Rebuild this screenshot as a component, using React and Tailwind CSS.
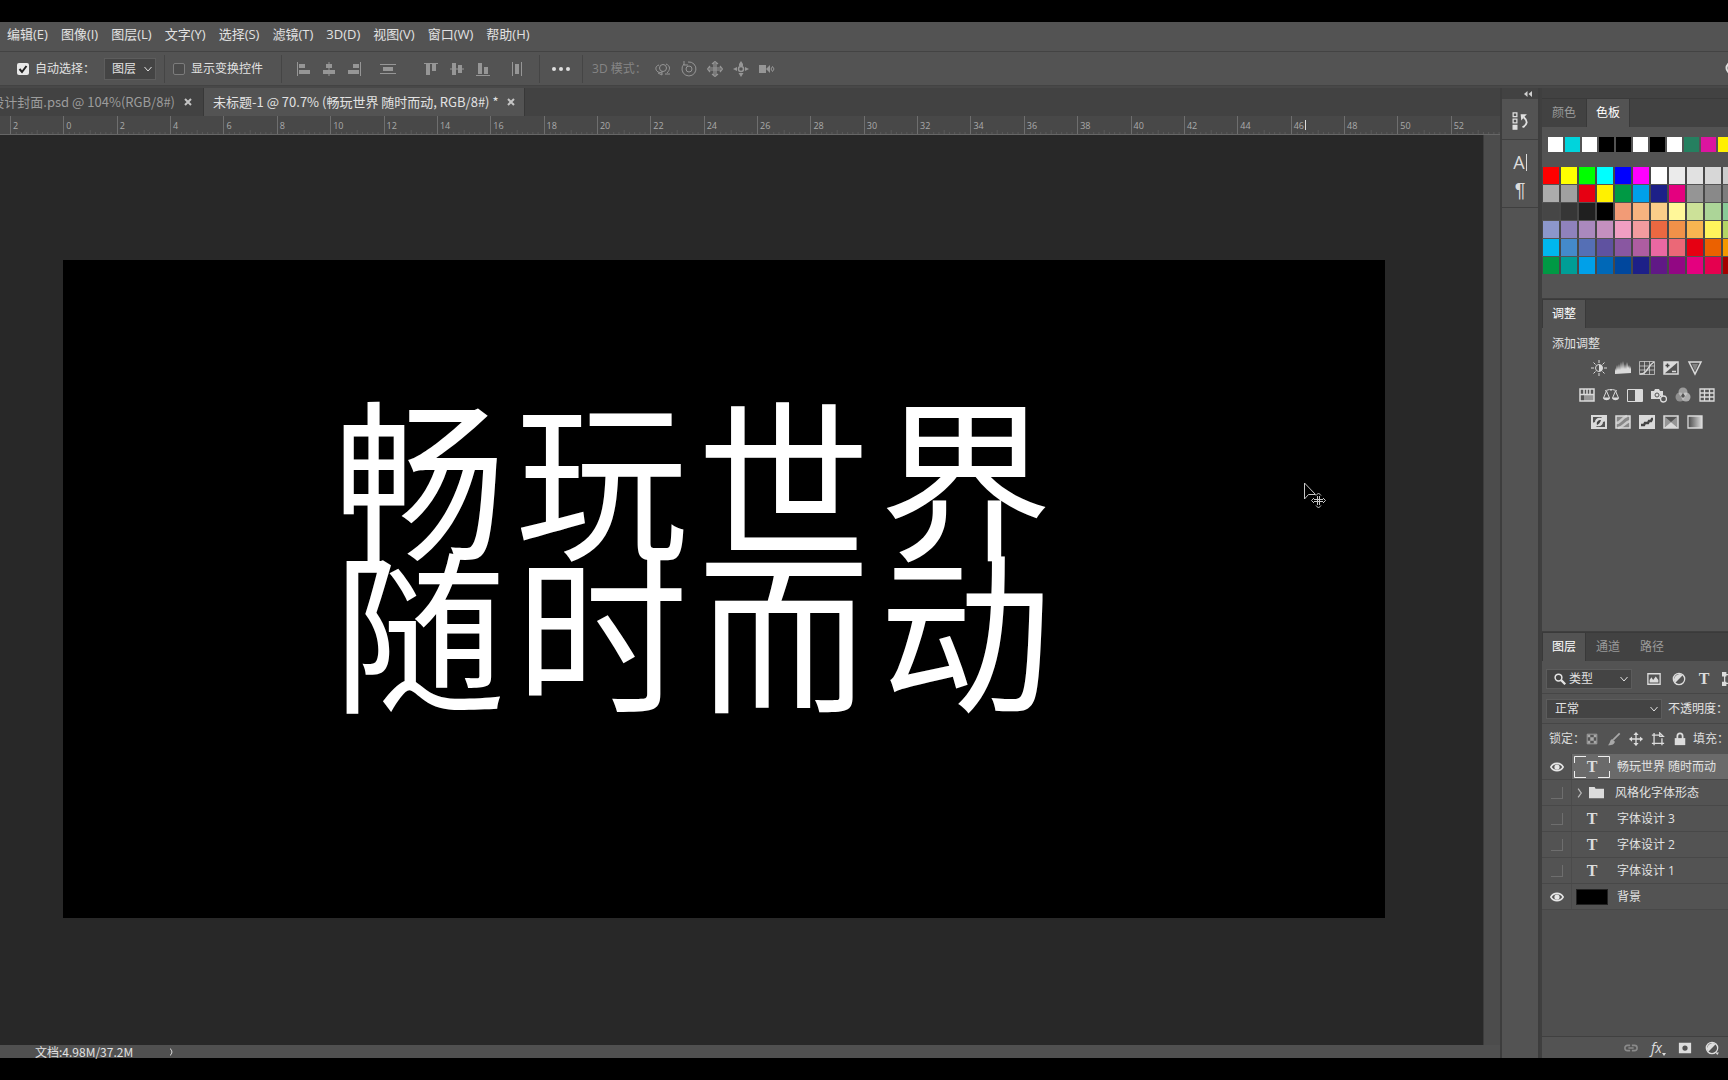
import { useState } from "react";

const menus = ["编辑(E)", "图像(I)", "图层(L)", "文字(Y)", "选择(S)", "滤镜(T)", "3D(D)", "视图(V)", "窗口(W)", "帮助(H)"];

const recentColors = ["#ffffff", "#00d4dc", "#ffffff", "#000000", "#000000", "#ffffff", "#000000", "#ffffff", "#258060", "#dc14a0", "#fff000"];

const swatches = [
    ["#ff0000", "#ffff00", "#00ff00", "#00ffff", "#0000ff", "#ff00ff", "#ffffff", "#ebebeb", "#e1e1e1", "#d7d7d7", "#cccccc"],
    ["#acacac", "#a0a0a0", "#e60012", "#fff100", "#009944", "#00a0e9", "#1d2088", "#e4007f", "#959595", "#898989", "#7d7d7d"],
    ["#464646", "#363636", "#202020", "#000000", "#f29b76", "#f6b37f", "#facd89", "#fff799", "#cce198", "#acd598", "#89c997"],
    ["#8c97cb", "#8f82bc", "#aa89bd", "#c490bf", "#f19ec2", "#f29c9f", "#eb6841", "#f19149", "#f8b551", "#fff45c", "#b3d465"],
    ["#00b7ee", "#448aca", "#556fb5", "#5f52a0", "#8957a1", "#ae5da1", "#ea68a2", "#eb6877", "#e60012", "#eb6100", "#f39800"],
    ["#009944", "#009e96", "#00a0e9", "#0068b7", "#00479d", "#1d2088", "#601986", "#920783", "#e4007f", "#e5004f", "#a40000"],
];

const initialLayers = [
    { id: 1, name: "畅玩世界 随时而动", kind: "text", visible: true, selected: true },
    { id: 2, name: "风格化字体形态", kind: "group", visible: false },
    { id: 3, name: "字体设计 3", kind: "text", visible: false },
    { id: 4, name: "字体设计 2", kind: "text", visible: false },
    { id: 5, name: "字体设计 1", kind: "text", visible: false },
    { id: 6, name: "背景", kind: "fill", visible: true },
];

const artLines = ["畅玩世界", "随时而动"];

const rulerMarks = Array.from({ length: 28 }, (_, i) => Math.abs(i * 2 - 2));

const Icon = ({ children, className = "size-4" }) => (
    <svg viewBox="0 0 16 16" fill="none" stroke="currentColor" className={`shrink-0 ${className}`} aria-hidden="true">
        {children}
    </svg>
);

const IconButton = ({ children, className = "size-4", label }) => (
    <button type="button" aria-label={label} className="flex shrink-0 items-center justify-center">
        <Icon className={className}>{children}</Icon>
    </button>
);

const Divider = () => <span className="h-7 w-px shrink-0 bg-[#454545]" />;

/* ---------- options bar ---------- */

const alignHorizontal = [
    { label: "左对齐", art: <><path d="M1.5 1v14" /><path fill="currentColor" stroke="none" d="M3 3h6v4H3zM3 9h11v4H3z" /></> },
    { label: "水平居中对齐", art: <><path d="M8 1v14" /><path fill="currentColor" stroke="none" d="M5 3h6v4H5zM2 9h12v4H2z" /></> },
    { label: "右对齐", art: <><path d="M14.5 1v14" /><path fill="currentColor" stroke="none" d="M7 3h6v4H7zM2 9h11v4H2z" /></> },
];

const alignVertical = [
    { label: "顶对齐", art: <><path d="M1 2.5h14" /><path fill="currentColor" stroke="none" d="M3 3h4v11H3zM9 3h4v7H9z" /></> },
    { label: "垂直居中对齐", art: <><path d="M1 8h14" /><path fill="currentColor" stroke="none" d="M3 2h4v12H3zM9 4h4v8H9z" /></> },
    { label: "底对齐", art: <><path d="M1 14.5h14" /><path fill="currentColor" stroke="none" d="M3 2h4v11H3zM9 6h4v7H9z" /></> },
];

const modes3d = [
    { label: "旋转", art: <><circle cx="8" cy="7" r="3.5" /><path d="M11 3c5 2 4 6 1 9M4 4C0 5 0 9 3 11l4 1M7 10v4l-4-2" /><path d="M10 13h5" /></> },
    { label: "滚动", art: <><circle cx="8" cy="8" r="3" /><path d="M3 3a7 7 0 1 0 4-2M3 0v4h4" /></> },
    { label: "拖动", art: <path strokeWidth="1.2" d="M7 2v12M9 2v12M2 7h12M2 9h12M5 3l3-2.500L11 3M5 13l3 2.500L11 13M3 5L.5 8 3 11M13 5l2.500 3L13 11" /> },
    { label: "滑动", art: <><circle cx="8" cy="8" r="2.500" strokeWidth="1.500" /><path fill="currentColor" stroke="none" d="M6 3l2-3 2 3v2H6zM5.500 12h5L8 16zM0 8l4-2v4zM16 8l-4-2v4z" /></> },
    { label: "缩放", art: <><path fill="currentColor" stroke="none" d="M0 4h7v8H0zM7 8l4-4v8z" /><path d="M13.500 5.500L12 8l1.500 2.500L15 8z" /></> },
];

const OptionsBar = () => (
    <div className="flex h-[35px] shrink-0 items-center border-y border-[#434343] bg-[#535353] pl-[17px] text-xs">
        <label className="flex w-[87px] shrink-0 items-center gap-1.5">
            <span className="relative flex size-3 items-center">
                <input type="checkbox" defaultChecked className="peer size-3 appearance-none rounded-xs bg-[#e8e8e8]" />
                <svg viewBox="0 0 12 12" className="pointer-events-none absolute inset-0 size-3" fill="none" stroke="#222" strokeWidth="2"><path d="M2.500 6l2.500 3 4.500-6" /></svg>
            </span>
            <span className="whitespace-nowrap">自动选择：</span>
        </label>
        <div className="relative w-[52px] shrink-0">
            <select aria-label="自动选择对象" className="block h-[22px] w-full appearance-none border border-[#5d5d5d] bg-[#444] pl-[7px] text-xs">
                <option>图层</option>
                <option>组</option>
            </select>
            <Icon className="pointer-events-none absolute top-[7px] right-1 size-2"><path strokeWidth="2" d="M1 4l7 8 7-8" /></Icon>
        </div>
        <div className="ml-2 flex shrink-0 items-center gap-2">
            <Divider />
            <label className="flex items-center gap-1.5">
                <input type="checkbox" className="size-3 appearance-none rounded-xs border border-[#7c7c7c] bg-[#4b4b4b]" />
                <span>显示变换控件</span>
            </label>
        </div>
        <div className="ml-[18px] flex shrink-0 items-center text-[#969696]">
            <Divider />
            <div className="ml-[14px] flex gap-[9px]">
                {alignHorizontal.map((a) => <IconButton key={a.label} label={a.label}>{a.art}</IconButton>)}
            </div>
            <div className="ml-[18px] flex">
                <IconButton label="垂直分布"><path d="M0 3.500h16M0 12.500h16" /><path fill="currentColor" stroke="none" d="M3 6h10v4H3z" /></IconButton>
            </div>
            <div className="ml-[14px]"><Divider /></div>
            <div className="ml-[13px] flex gap-[10px]">
                {alignVertical.map((a) => <IconButton key={a.label} label={a.label}>{a.art}</IconButton>)}
            </div>
            <div className="mr-[14px] ml-[18px] flex">
                <IconButton label="水平分布"><path d="M3.500 1v14M12.500 1v14" /><path fill="currentColor" stroke="none" d="M6 3h4v10H6z" /></IconButton>
            </div>
            <Divider />
            <button type="button" aria-label="更多" className="mx-3 flex gap-[3px] text-[#dedede]">
                <span className="size-[4px] rounded-full bg-current" />
                <span className="size-[4px] rounded-full bg-current" />
                <span className="size-[4px] rounded-full bg-current" />
            </button>
            <Divider />
            <span className="w-[72px] pl-[9px] whitespace-nowrap text-[#858585]">3D 模式：</span>
            <div className="flex gap-[10px]">
                {modes3d.map((m) => <IconButton key={m.label} label={m.label}>{m.art}</IconButton>)}
            </div>
        </div>
        <div className="-mr-[13px] ml-auto flex shrink-0 text-[#e0e0e0]">
            <IconButton label="搜索"><circle cx="7" cy="7" r="5.500" strokeWidth="2" /><path strokeWidth="2" d="M11 11l4 4" /></IconButton>
        </div>
    </div>
);

/* ---------- document area ---------- */

const CloseButton = () => (
    <button type="button" aria-label="关闭" className="text-[#c4c4c4]">
        <Icon className="size-2"><path strokeWidth="4" d="M2 2l12 12M14 2L2 14" /></Icon>
    </button>
);

const DocumentTabs = () => (
    <div className="flex h-[28px] shrink-0 overflow-hidden bg-[#424242] font-['Noto_Sans_CJK_SC',sans-serif] text-[13px] whitespace-nowrap">
        <div className="flex w-[203px] shrink-0 items-center justify-end gap-[9px] pr-[11px] text-[#9c9c9c]">
            <span>体设计封面.psd @ 104%(RGB/8#)</span>
            <CloseButton />
        </div>
        <div className="flex shrink-0 items-center gap-[9px] border-x border-[#383838] bg-[#535353] px-[9px]">
            <span>未标题-1 @ 70.7% (畅玩世界 随时而动, RGB/8#) *</span>
            <CloseButton />
        </div>
    </div>
);

const Ruler = () => (
    <div className="relative h-[19px] shrink-0 overflow-hidden border-b border-[#666] bg-[#484848] pl-2.5">
        <div className="flex h-full w-[1494px] text-[9px] leading-[19px] text-[#aaa]">
            {rulerMarks.map((mark, i) => (
                <div key={i} className="relative flex-1 border-l border-[#6e6e6e] pl-0.5">
                    {mark}
                    <svg viewBox="0 0 20 4" preserveAspectRatio="none" className="absolute bottom-0 left-0 h-1 w-full" stroke="#6a6a6a" strokeWidth="0.300">
                        <path d="M2 2v2M4 2v2M6 2v2M8 2v2M10 0v4M12 2v2M14 2v2M16 2v2M18 2v2" />
                    </svg>
                </div>
            ))}
        </div>
        {/* pointer position */}
        <span className="absolute top-1 left-[1305px] h-2.5 w-px bg-[#ddd]" />
    </div>
);

const MoveCursor = () => (
    <svg viewBox="0 0 24 28" className="absolute top-[222px] left-[1240px] h-7 w-6" fill="none" stroke="#c8c8c8" strokeWidth="1" aria-hidden="true">
        <path fill="#000" d="M1.500 1v16l4-4.500h7z" />
        <path d="M14.500 14v9M16.500 14v9M11 17.500h9M11 19.500h9M13 13.500l2.500-2.500 2.500 2.500M13 23.500l2.500 2.500 2.500-2.500M11 16l-2.500 2.500L11 21M20 16l2.500 2.500L20 21" />
    </svg>
);

const Workspace = () => (
    <main className="flex min-w-0 flex-1 flex-col">
        <DocumentTabs />
        <Ruler />
        <div className="flex min-h-0 flex-1">
            <div className="min-w-0 flex-1 overflow-hidden bg-[#282828] pt-[125px] pl-[63px]">
                <div className="relative h-[658px] w-[1322px] bg-black pt-[144px] pl-[270px]">
                    {artLines.map((line) => (
                        <p key={line} className="flex gap-[9px] text-[173px] leading-[152px] text-white">
                            {[...line].map((char) => <span key={char}>{char}</span>)}
                        </p>
                    ))}
                    <MoveCursor />
                </div>
            </div>
            <div className="w-[17px] shrink-0 border-l border-[#3c3c3c] bg-[#4c4c4c]" />
        </div>
        <footer className="flex h-[13px] shrink-0 items-center bg-[#505050] pl-[35px] font-['Noto_Sans_CJK_SC',sans-serif] text-xs leading-[13px]">
            <span className="w-[133px]">文档:4.98M/37.2M</span>
            <Icon className="size-2"><path strokeWidth="2" d="M4 1c5 4 5 10 0 14" /></Icon>
        </footer>
    </main>
);

/* ---------- collapsed dock ---------- */

const Dock = () => (
    <div className="flex w-10 shrink-0 flex-col border-x-2 border-[#3d3d3d] bg-[#535353]">
        <div className="flex h-[11px] items-center justify-end bg-[#424242] pr-1.5">
            <svg viewBox="0 0 8 6" className="h-1.5 w-2" fill="#d0d0d0"><path d="M3.500 0v6L0 3zM8 0v6L4.500 3z" /></svg>
        </div>
        <div className="flex h-[41px] items-center justify-center border-b border-[#3f3f3f] pt-1">
            <IconButton label="历史记录" className="size-5 text-[#e0e0e0]">
                <path d="M2.500 1.500h3v3h-3zM2.500 6.500h3v3h-3z" />
                <path fill="currentColor" d="M2.500 11.500h3v3h-3z" />
                <path strokeWidth="1.500" d="M10 13c4-2 4.500-5 1-8" />
                <path fill="currentColor" stroke="none" d="M8.500 2.500h5L9 7.500z" />
            </IconButton>
        </div>
        <div className="flex h-[68px] flex-col items-center gap-2 border-b border-[#3f3f3f] pt-3 text-[#dcdcdc]">
            <button type="button" className="flex h-5 items-center gap-px text-lg leading-5">
                A<span className="h-[17px] w-px bg-current" />
            </button>
            <button type="button" className="h-5 font-['Liberation_Sans',sans-serif] text-xl leading-5">¶</button>
        </div>
    </div>
);

/* ---------- panels ---------- */

const PanelTabs = ({ tabs, active }) => (
    <div className="flex h-[29px] shrink-0 border-t border-[#3a3a3a] bg-[#424242] text-xs">
        {tabs.map((tab) => (
            <button
                key={tab}
                type="button"
                className={`w-11 shrink-0 ${tab === active ? "border-x border-[#393939] bg-[#535353] text-white" : "text-[#9a9a9a]"}`}
            >
                {tab}
            </button>
        ))}
    </div>
);

const SwatchPanel = () => (
    <section className="flex h-[210px] shrink-0 flex-col">
        <div className="h-2.5 shrink-0 bg-[#424242]" />
        <PanelTabs tabs={["颜色", "色板"]} active="色板" />
        <div className="mt-2.5 flex gap-0.5 pl-1.5">
            {recentColors.map((color, i) => (
                <button key={i} type="button" aria-label={color} className="size-[15px] shrink-0" style={{ backgroundColor: color }} />
            ))}
        </div>
        <div className="mt-[15px] flex flex-col gap-px">
            {swatches.map((row, i) => (
                <div key={i} className="flex gap-0.5 bg-[#484848] pl-px">
                    {row.map((color) => (
                        <button key={color} type="button" aria-label={color} className="h-[17px] w-4 shrink-0" style={{ backgroundColor: color }} />
                    ))}
                </div>
            ))}
        </div>
    </section>
);

const adjustments = [
    [
        { label: "亮度/对比度", art: <><circle cx="8" cy="8" r="3.500" /><path fill="currentColor" stroke="none" d="M8 4.500a3.500 3.500 0 0 1 0 7z" /><path d="M8 0v3M8 13v3M0 8h3M13 8h3M2.500 2.500l2 2M11.500 11.500l2 2M13.500 2.500l-2 2M4.500 11.500l-2 2" /></> },
        { label: "色阶", art: <path fill="currentColor" stroke="none" d="M0 14V8l1 3 1-6 1 5 1-6 1 6 1-8 1 7 1-8 1 8 1-5 1 5 1-7 1 6 1-3 1 4 1-3v7z" /> },
        { label: "曲线", art: <><path strokeOpacity=".7" d="M.5 1.500h15v13H.5zM5.500 1.500v13M10.500 1.500v13M.5 6h15M.5 10h15" /><path strokeWidth="1.400" d="M1 14c8 0 7-8 14-12" /></> },
        { label: "曝光度", art: <><path strokeWidth="1.500" d="M1 2h14v12H1z" /><path fill="currentColor" stroke="none" d="M1 14V2h14z" /><path stroke="#444" strokeWidth="1.500" d="M2.500 5.500h4M4.500 3.500v4" /><path strokeWidth="1.500" d="M9 11.500h4" /></> },
        { label: "自然饱和度", art: <><path strokeWidth="1.500" d="M2 2h12L8 14z" /><path fill="currentColor" stroke="none" opacity=".35" d="M5 4h6l-3 7z" /></> },
    ],
    [
        { label: "色相/饱和度", art: <><path strokeWidth="1.500" d="M1 2h14v12H1zM1 7.500h14M5 2v5M8 2v5M11 2v5" /><path fill="currentColor" stroke="none" opacity=".5" d="M5 8h10v6H5z" /></> },
        { label: "色彩平衡", art: <><path d="M8 2v2M2 4c4-2 8-2 12 0M3.500 4l-3 7h6zM12.500 4l-3 7h6z" /><path fill="currentColor" stroke="none" d="M0 11h7c-1 3-6 3-7 0zM9 11h7c-1 3-6 3-7 0z" /></> },
        { label: "黑白", art: <><path d="M.5 2.500h15v12H.5z" /><path fill="currentColor" stroke="none" d="M8 2h7v12H8z" /></> },
        { label: "照片滤镜", art: <><path fill="currentColor" stroke="none" d="M0 4h3l1-2h4l1 2h3v5H9v3H0z" /><circle cx="6" cy="8" r="2" stroke="#535353" /><circle cx="12.500" cy="12" r="3" strokeWidth="1.300" /></> },
        { label: "通道混合器", art: <g stroke="none" fill="currentColor"><circle cx="8" cy="5" r="4.500" opacity=".55" /><circle cx="5" cy="10" r="4.500" opacity=".45" /><circle cx="11" cy="10" r="4.500" opacity=".65" /><path fill="#535353" d="M8 6l2 3-2 2-2-2z" /></g> },
        { label: "颜色查找", art: <path strokeWidth="1.300" d="M1 2h14v12H1zM5.500 2v12M10.500 2v12M1 6h14M1 10h14" /> },
    ],
    [
        { label: "反相", art: <><path strokeWidth="2" d="M1 2h14v12H1z" /><path fill="currentColor" stroke="none" d="M1 14V9l3-1c0-3 3-5 6-4l2-2h3v5l-3 1c0 3-3 5-6 4l-2 2z" /><path fill="#444" stroke="none" d="M6 11c-1-3 1-5 4-5-1 3-2 4-4 5z" /></> },
        { label: "色调分离", art: <><path fill="currentColor" stroke="none" opacity=".4" d="M1 2h14v12H1z" /><path strokeWidth="1.500" d="M1 2h14v12H1z" /><path opacity=".8" strokeWidth="2.500" d="M1 9c5 0 5-5 11-7M3 14c5 0 6-5 12-7" /></> },
        { label: "阈值", art: <><path fill="currentColor" stroke="none" d="M0 1h16v14H0z" /><path stroke="#444" strokeWidth="2.500" d="M2 11h3l1-2h3l1-2h2l1-2h1" /></> },
        { label: "可选颜色", art: <><path strokeWidth="1.500" d="M1 2h14v12H1z" /><path fill="currentColor" stroke="none" opacity=".5" d="M1 2l7 6-7 6zM15 2L8 8l7 6z" /><path fill="currentColor" stroke="none" d="M1 14l7-6 7 6z" /></> },
        { label: "渐变映射", art: <><defs><linearGradient id="ramp"><stop stopColor="#484848" /><stop offset="1" stopColor="#ddd" /></linearGradient></defs><path fill="url(#ramp)" strokeWidth="1.300" d="M1 2h14v12H1z" /></> },
    ],
];

const AdjustmentPanel = () => (
    <section className="flex h-[333px] shrink-0 flex-col border-t border-[#3f3f3f]">
        <PanelTabs tabs={["调整"]} active="调整" />
        <h2 className="mt-2 pl-[10px] text-xs leading-4">添加调整</h2>
        <div className="mt-2 flex w-[185px] flex-col items-center gap-[11px] pl-6 text-[#dadada]">
            {adjustments.map((row, i) => (
                <div key={i} className="flex gap-2">
                    {row.map((item) => <IconButton key={item.label} label={item.label}>{item.art}</IconButton>)}
                </div>
            ))}
        </div>
    </section>
);

const PanelSelect = ({ label, value, className }) => (
    <div className="relative">
        <select aria-label={label} className={`block h-5 appearance-none border border-[#5c5c5c] bg-[#444] text-xs leading-4 ${className}`}>
            <option>{value}</option>
        </select>
        <Icon className="pointer-events-none absolute top-1.5 right-1 size-2"><path strokeWidth="2" d="M1 4l7 8 7-8" /></Icon>
    </div>
);

const TextGlyph = () => (
    <span className="font-['Liberation_Serif',serif] text-base leading-none font-bold text-[#dcdcdc]">T</span>
);

const LayerThumb = ({ layer }) => {
    if (layer.kind === "group") {
        return (
            <span className="flex items-center gap-1">
                <Icon className="size-2.5 text-[#bbb]"><path strokeWidth="2" d="M5 1l5 7-5 7" /></Icon>
                <Icon className="size-[15px] text-[#dcdcdc]"><path fill="currentColor" stroke="none" d="M0 2h6l1 2h9v10H0z" /></Icon>
            </span>
        );
    }
    if (layer.kind === "fill") {
        return <span className="h-4 w-8 border border-[#222] bg-black" />;
    }
    return (
        <span className="relative flex h-[22px] w-9 items-center justify-center">
            {layer.selected && (
                <svg viewBox="0 0 36 22" className="absolute inset-0 h-[22px] w-9" fill="none" stroke="#eee">
                    <path d="M12 .5H.5V7M.5 15v6.500H12M24 .5h11.500V7M35.500 15v6.500H24" />
                </svg>
            )}
            <TextGlyph />
        </span>
    );
};

const LayersPanel = () => {
    const [layers, setLayers] = useState(initialLayers);

    const toggle = (id) => {
        setLayers(layers.map((l) => (l.id === id ? { ...l, visible: !l.visible } : l)));
    };

    return (
        <section className="flex min-h-0 flex-1 flex-col border-t border-[#3f3f3f]">
            <PanelTabs tabs={["图层", "通道", "路径"]} active="图层" />
            <div className="flex h-[33px] shrink-0 items-center border-b border-[#464646] pt-1 pl-1">
                <div className="relative">
                    <PanelSelect label="过滤图层" value="类型" className="w-[86px] pl-[22px]" />
                    <Icon className="pointer-events-none absolute top-1 left-2 size-3 text-[#e4e4e4]"><circle cx="6" cy="6" r="4.500" strokeWidth="2" /><path strokeWidth="3" d="M9.500 9.500L15 15" /></Icon>
                </div>
                <div className="ml-[15px] flex items-center gap-[11px] text-[#dcdcdc]">
                    <IconButton label="像素图层" className="size-3.5"><path strokeWidth="1.500" d="M1 2h14v12H1z" /><path fill="currentColor" stroke="none" d="M3 12V9l2-3 2 3 3-4 3 4v3z" /></IconButton>
                    <IconButton label="调整图层" className="size-3.5"><circle cx="8" cy="8" r="6.500" strokeWidth="1.500" /><path fill="currentColor" stroke="none" d="M3.500 12.500a6.500 6.500 0 0 1 9-9z" /></IconButton>
                    <button type="button" aria-label="文字图层" className="flex w-3.5 justify-center"><TextGlyph /></button>
                    <IconButton label="形状图层" className="size-3.5"><path strokeWidth="1.500" d="M3 3h10v10H3z" /><path fill="currentColor" stroke="none" d="M0 0h5v5H0zM11 0h5v5h-5zM0 11h5v5H0zM11 11h5v5h-5z" /></IconButton>
                </div>
            </div>
            <div className="flex h-[30px] shrink-0 items-center border-b border-[#464646] pt-px pl-1 text-xs">
                <PanelSelect label="混合模式" value="正常" className="w-[116px] pl-2" />
                <span className="ml-1.5 whitespace-nowrap">不透明度：</span>
            </div>
            <div className="flex h-[30px] shrink-0 items-center pl-[7px] text-xs text-[#dcdcdc]">
                <span className="w-[37px] whitespace-nowrap">锁定：</span>
                <div className="flex gap-2">
                    <IconButton label="锁定透明像素" className="size-3.5 text-[#a8a8a8]"><path d="M2.500 2.500h11v11h-11z" /><path fill="currentColor" stroke="none" d="M3 3h3v3H3zM10 3h3v3h-3zM6 6h4v4H6zM3 10h3v3H3zM10 10h3v3h-3z" /></IconButton>
                    <IconButton label="锁定图像像素" className="size-3.5 text-[#a8a8a8]"><path strokeWidth="2" d="M14.500 1.500L7 9" /><path fill="currentColor" stroke="none" d="M6 8l3 3c-1 4-5 4-8 4 3-2 2-6 5-7z" /></IconButton>
                    <IconButton label="锁定位置" className="size-3.5"><path strokeWidth="1.500" d="M8 1v14M1 8h14" /><path fill="currentColor" stroke="none" d="M5 3.500L8 0l3 3.500zM5 12.500L8 16l3-3.500zM3.500 5L0 8l3.500 3zM12.500 5L16 8l-3.500 3z" /></IconButton>
                    <IconButton label="锁定画板" className="size-3.5"><path strokeWidth="1.500" d="M3.500 1v14M1 3.500h9M12.500 7v8M1 13h14M10 1l4 4h-4z" /></IconButton>
                    <IconButton label="全部锁定" className="size-3.5"><path strokeWidth="2" d="M5 8V4.500a3 3 0 0 1 6 0V8" /><path fill="currentColor" stroke="none" d="M2 7h12v8H2z" /></IconButton>
                </div>
                <span className="ml-1.5 whitespace-nowrap">填充：</span>
            </div>
            <ul className="flex flex-1 flex-col bg-[#4f4f4f]">
                {layers.map((layer) => (
                    <li key={layer.id} className="flex h-[26px] shrink-0 items-stretch border-b border-[#484848] bg-[#535353] text-xs">
                        <button
                            type="button"
                            aria-label="可见性"
                            onClick={() => toggle(layer.id)}
                            className="flex w-[30px] shrink-0 items-center justify-center border-r border-[#4b4b4b]"
                        >
                            {layer.visible ? (
                                <Icon className="size-3.5 text-[#e6e6e6]"><path strokeWidth="1.800" d="M1 8c3-5.500 11-5.500 14 0-3 5.500-11 5.500-14 0z" /><circle cx="8" cy="8" r="3" fill="currentColor" stroke="none" /></Icon>
                            ) : (
                                <span className="size-3 border-r border-b border-[#6e6e6e]" />
                            )}
                        </button>
                        <div className={`flex flex-1 items-center whitespace-nowrap ${layer.selected ? "bg-[#6a6a6a]" : ""}`}>
                            <span className={`flex shrink-0 items-center justify-center ${layer.kind === "group" ? "w-[43px] pr-2" : "w-[45px] pr-[5px]"}`}>
                                <LayerThumb layer={layer} />
                            </span>
                            <span>{layer.name}</span>
                        </div>
                    </li>
                ))}
            </ul>
            <div className="flex h-[22px] shrink-0 items-center justify-start gap-[13px] border-t border-[#404040] pt-px pl-[82px] text-[#dedede]">
                <IconButton label="链接图层" className="size-3.5 text-[#8a8a8a]"><path strokeWidth="1.800" d="M7 5H4a3 3 0 0 0 0 6h3M9 5h3a3 3 0 0 1 0 6H9M5 8h6" /></IconButton>
                <button type="button" className="flex w-3.5 items-end text-sm leading-4 italic">
                    fx
                    <svg viewBox="0 0 4 3" className="h-[3px] w-1 shrink-0" fill="currentColor"><path d="M0 0h4L2 3z" /></svg>
                </button>
                <IconButton label="添加蒙版" className="size-3.5"><path fill="currentColor" stroke="none" fillRule="evenodd" d="M1 2h14v12H1zM8 5a3 3 0 1 0 0 6 3 3 0 0 0 0-6z" /></IconButton>
                <IconButton label="新建调整图层" className="size-3.5"><circle cx="8" cy="8" r="6.500" strokeWidth="1.500" /><path fill="currentColor" stroke="none" d="M3.500 12.500a6.500 6.500 0 0 1 9-9z" /><path fill="currentColor" stroke="none" d="M12 13h4l-2 3z" /></IconButton>
            </div>
        </section>
    );
};

const App = () => (
    <div className="flex h-screen flex-col overflow-hidden bg-black py-[22px] font-['Open_Sans','Noto_Sans_CJK_SC',sans-serif] text-[#e2e2e2]">
        <nav className="flex h-[29px] shrink-0 gap-[13px] bg-[#535353] pl-[7px] text-[13px] leading-6">
            {menus.map((menu) => (
                <button key={menu} type="button" className="h-6 shrink-0">{menu}</button>
            ))}
        </nav>
        <OptionsBar />
        <div className="flex min-h-0 flex-1 border-t-2 border-[#484848]">
            <Workspace />
            <Dock />
            <aside className="flex w-[188px] shrink-0 flex-col overflow-hidden border-l-2 border-[#3f3f3f] bg-[#535353]">
                <SwatchPanel />
                <AdjustmentPanel />
                <LayersPanel />
            </aside>
        </div>
    </div>
);

export default App;
